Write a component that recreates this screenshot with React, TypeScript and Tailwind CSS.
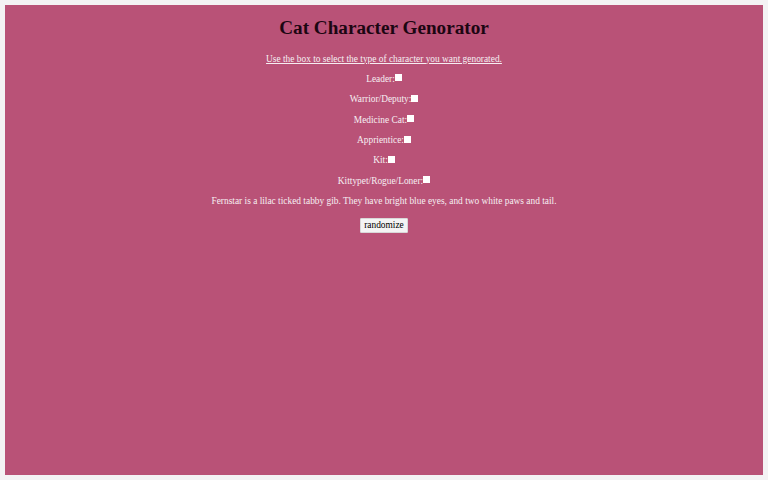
import React from "react";

const roles = [
  "Leader:",
  "Warrior/Deputy:",
  "Medicine Cat:",
  "Apprientice:",
  "Kit:",
  "Kittypet/Rogue/Loner:",
];

export default function App() {
  return (
    <div className="w-[768px] h-[480px] bg-[#f4f2f4] p-[5px] overflow-hidden">
      <div
        className="h-[470px] bg-[#b95277] text-center text-[9.4px] leading-[11px] text-[#f6eef2] pt-[12px]"
        style={{ fontFamily: '"Liberation Serif", "Times New Roman", serif' }}
      >
        <h1 className="text-[19.2px] leading-[22px] font-bold text-[#1c0612] mb-[14.5px]">
          Cat Character Genorator
        </h1>
        <p className="underline mb-[9.4px]">
          Use the box to select the type of character you want genorated.
        </p>
        {roles.map((r) => (
          <p key={r} className="mb-[9.4px] flex justify-center items-center">
            <span>{r}</span>
            <span className="inline-block w-[7px] h-[7px] bg-white -mt-[3px]" />
          </p>
        ))}
        <p className="mb-[10.5px]">
          Fernstar is a lilac ticked tabby gib. They have bright blue eyes, and two white paws and tail.
        </p>
        <button className="bg-[#f4f4f4] text-black text-[9.4px] leading-[11px] px-[3.5px] py-[1px] border border-[#d8d8d8] rounded-[1px]">
          randomize
        </button>
      </div>
    </div>
  );
}
